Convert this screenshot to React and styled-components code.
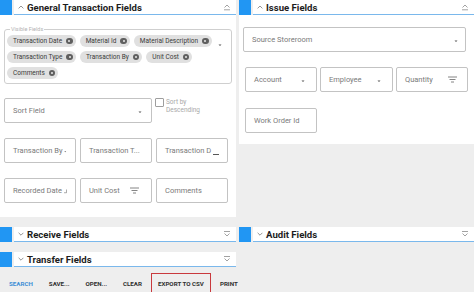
import React from "react";
import styled, { createGlobalStyle } from "styled-components";

const GlobalStyle = createGlobalStyle`
  html, body { margin: 0; padding: 0; }
  body {
    font-family: Roboto, "Liberation Sans", Arial, sans-serif;
    background: #eeeeee;
  }
`;

const Page = styled.div`
  width: 474px;
  height: 292px;
  overflow: hidden;
  background: #eeeeee;
  display: flex;
  flex-direction: column;
`;

const Columns = styled.div`
  display: grid;
  grid-template-columns: 236px 235px;
  column-gap: 3px;
  row-gap: 10px;
  align-items: start;
`;

const Section = styled.div`
  display: flex;
  flex-direction: column;
`;

const HeaderRow = styled.div`
  display: flex;
  height: 15px;
  gap: 2px;
`;

const BlueTab = styled.div`
  width: 12px;
  flex: none;
  background: #2196f3;
`;

const HeaderBar = styled.div`
  flex: 1;
  display: flex;
  align-items: center;
  background: #ffffff;
  border-bottom: 1.5px solid #7ab8ec;
  padding: 0 5px 0 4px;
  box-sizing: border-box;
`;

const HeaderTitle = styled.span`
  flex: 1;
  margin-left: 3px;
  font-size: 9.6px;
  font-weight: 700;
  color: #1d1d1d;
`;

const Body = styled.div`
  background: #ffffff;
  height: ${(p) => p.$height}px;
  padding: ${(p) => p.$pad};
  box-sizing: border-box;
  display: flex;
  flex-direction: column;
`;

const FieldSet = styled.fieldset`
  margin: 0;
  padding: 4px 9px 3px 2px;
  border: 1px solid #cfcfcf;
  border-radius: 3px;
  display: flex;
  align-items: flex-start;
  height: 57px;
  box-sizing: border-box;
`;

const Legend = styled.legend`
  font-size: 5.5px;
  color: #b3b3b3;
  padding: 0 1px;
  margin-left: 3px;
  line-height: 4px;
`;

const ChipWrap = styled.div`
  flex: 1;
  display: flex;
  flex-wrap: wrap;
  gap: 4px 4px;
  margin-top: 0;
`;

const Chip = styled.span`
  display: inline-flex;
  align-items: center;
  height: 12px;
  border-radius: 6px;
  background: #e0e0e0;
  padding: 0 3px 0 6px;
  font-size: 6.5px;
  color: #3a3a3a;
  gap: 4px;
`;

const ChipClose = styled.span`
  width: 6.5px;
  height: 6.5px;
  border-radius: 50%;
  background: #5f5f5f;
  display: inline-flex;
  align-items: center;
  justify-content: center;
`;

const Row = styled.div`
  display: flex;
  gap: ${(p) => p.$gap || 4}px;
  margin-top: ${(p) => p.$top || 0}px;
  align-items: flex-start;
`;

const Field = styled.div`
  width: ${(p) => p.$w}px;
  height: ${(p) => p.$h || 25}px;
  flex: none;
  box-sizing: border-box;
  border: 1px solid #c3c3c3;
  border-radius: 2px;
  display: flex;
  align-items: center;
  padding: 0 ${(p) => p.$pr || 8}px 0 8px;
  font-size: 7.5px;
  color: #7a7a7a;
  gap: 2px;
`;

const FieldLabel = styled.span`
  flex: ${(p) => (p.$grow ? 1 : "none")};
  white-space: nowrap;
`;

const CheckWrap = styled.div`
  display: flex;
  gap: 2px;
  align-items: flex-start;
`;

const CheckBox = styled.span`
  width: 7px;
  height: 7px;
  border: 1px solid #9e9e9e;
  border-radius: 1px;
  flex: none;
`;

const CheckText = styled.span`
  font-size: 6.5px;
  line-height: 8px;
  color: #a8a8a8;
`;

const Toolbar = styled.div`
  margin-top: auto;
  height: 19px;
  display: flex;
  align-items: stretch;
  padding-left: 2px;
  gap: 2px;
`;

const ToolButton = styled.div`
  display: flex;
  align-items: center;
  padding: 1px 6px 0 6px;
  font-size: 6.2px;
  font-weight: 700;
  color: ${(p) => (p.$primary ? "#3d8fd6" : "#2f2f2f")};
  border: 1.5px solid ${(p) => (p.$outlined ? "#c9393d" : "transparent")};
  border-bottom: none;
  box-sizing: border-box;
`;

const Caret = ({ up }) => (
  <svg width="6" height="4" viewBox="0 0 6 4">
    <path
      d={up ? "M0.6 3.4 L3 1 L5.4 3.4" : "M0.6 0.8 L3 3.2 L5.4 0.8"}
      fill="none"
      stroke="#7a7a7a"
      strokeWidth="0.8"
    />
  </svg>
);

const Toggle = ({ expanded }) => (
  <svg width="8" height="8" viewBox="0 0 8 8">
    {expanded ? (
      <>
        <path d="M1.5 4.5 L4 2 L6.5 4.5" fill="none" stroke="#8a8a8a" strokeWidth="0.8" />
        <path d="M1 6.8 H7" stroke="#8a8a8a" strokeWidth="0.8" />
      </>
    ) : (
      <>
        <path d="M1 1.5 H7" stroke="#8a8a8a" strokeWidth="0.8" />
        <path d="M1.5 3.5 L4 6 L6.5 3.5" fill="none" stroke="#8a8a8a" strokeWidth="0.8" />
      </>
    )}
  </svg>
);

const DropArrow = () => (
  <svg width="4" height="6" viewBox="0 0 4 6">
    <path d="M0.5 3.5 L3.5 3.5 L2 5 Z" fill="#555" />
  </svg>
);

const FilterIcon = () => (
  <svg width="9" height="7" viewBox="0 0 9 7">
    <path d="M0 1 H9 M1.5 3.5 H7.5 M3 6 H6" stroke="#777" strokeWidth="0.9" />
  </svg>
);

const DateMark = ({ corner }) => (
  <svg width="6" height="8" viewBox="0 0 6 8">
    {corner ? (
      <path d="M0 7.5 H5 V1" fill="none" stroke="#444" strokeWidth="0.9" />
    ) : (
      <path d="M0 7.5 H6" stroke="#444" strokeWidth="0.9" />
    )}
  </svg>
);

const CloseGlyph = () => (
  <svg width="4" height="4" viewBox="0 0 4 4">
    <path d="M1 1 L3 3 M3 1 L1 3" stroke="#e0e0e0" strokeWidth="0.8" />
  </svg>
);

function Header({ title, expanded }) {
  return (
    <HeaderRow>
      <BlueTab />
      <HeaderBar>
        <Caret up={expanded} />
        <HeaderTitle>{title}</HeaderTitle>
        <Toggle expanded={expanded} />
      </HeaderBar>
    </HeaderRow>
  );
}

const chips = [
  "Transaction Date",
  "Material Id",
  "Material Description",
  "Transaction Type",
  "Transaction By",
  "Unit Cost",
  "Comments",
];

function App() {
  return (
    <Page>
      <GlobalStyle />
      <Columns>
        <Section>
          <Header title="General Transaction Fields" expanded />
          <Body $height={202} $pad="12px 4px 0 4px">
            <FieldSet>
              <Legend>Visible Fields</Legend>
              <ChipWrap>
                {chips.map((c) => (
                  <Chip key={c}>
                    {c}
                    <ChipClose>
                      <CloseGlyph />
                    </ChipClose>
                  </Chip>
                ))}
              </ChipWrap>
              <Row $top={6}>
                <DropArrow />
              </Row>
            </FieldSet>
            <Row $top={14} $gap={3}>
              <Field $w={148} $pr={9}>
                <FieldLabel $grow>Sort Field</FieldLabel>
                <DropArrow />
              </Field>
              <CheckWrap>
                <CheckBox />
                <CheckText>
                  Sort by
                  <br />
                  Descending
                </CheckText>
              </CheckWrap>
            </Row>
            <Row $top={15}>
              <Field $w={72}>
                <FieldLabel>Transaction By</FieldLabel>
                <DropArrow />
              </Field>
              <Field $w={72}>
                <FieldLabel>Transaction T...</FieldLabel>
              </Field>
              <Field $w={72} $pr={4}>
                <FieldLabel>Transaction D</FieldLabel>
                <DateMark />
              </Field>
            </Row>
            <Row $top={15}>
              <Field $w={72}>
                <FieldLabel>Recorded Date</FieldLabel>
                <DateMark corner />
              </Field>
              <Field $w={72} $pr={12}>
                <FieldLabel $grow>Unit Cost</FieldLabel>
                <FilterIcon />
              </Field>
              <Field $w={72}>
                <FieldLabel>Comments</FieldLabel>
              </Field>
            </Row>
          </Body>
        </Section>
        <Section>
          <Header title="Issue Fields" expanded />
          <Body $height={129} $pad="12px 8px 0 4px">
            <Field $w={223} $pr={7}>
              <FieldLabel $grow>Source Storeroom</FieldLabel>
              <DropArrow />
            </Field>
            <Row $top={15} $gap={3}>
              <Field $w={72} $pr={11} style={{ marginLeft: 2 }}>
                <FieldLabel $grow>Account</FieldLabel>
                <DropArrow />
              </Field>
              <Field $w={73} $pr={11}>
                <FieldLabel $grow>Employee</FieldLabel>
                <DropArrow />
              </Field>
              <Field $w={72} $pr={10}>
                <FieldLabel $grow>Quantity</FieldLabel>
                <FilterIcon />
              </Field>
            </Row>
            <Row $top={16}>
              <Field $w={72} style={{ marginLeft: 2 }}>
                <FieldLabel>Work Order Id</FieldLabel>
              </Field>
            </Row>
          </Body>
        </Section>
        <Section>
          <Header title="Receive Fields" />
        </Section>
        <Section>
          <Header title="Audit Fields" />
        </Section>
        <Section>
          <Header title="Transfer Fields" />
        </Section>
      </Columns>
      <Toolbar>
        <ToolButton $primary>SEARCH</ToolButton>
        <ToolButton>SAVE...</ToolButton>
        <ToolButton>OPEN...</ToolButton>
        <ToolButton>CLEAR</ToolButton>
        <ToolButton $outlined>EXPORT TO CSV</ToolButton>
        <ToolButton>PRINT</ToolButton>
      </Toolbar>
    </Page>
  );
}

export default App;
